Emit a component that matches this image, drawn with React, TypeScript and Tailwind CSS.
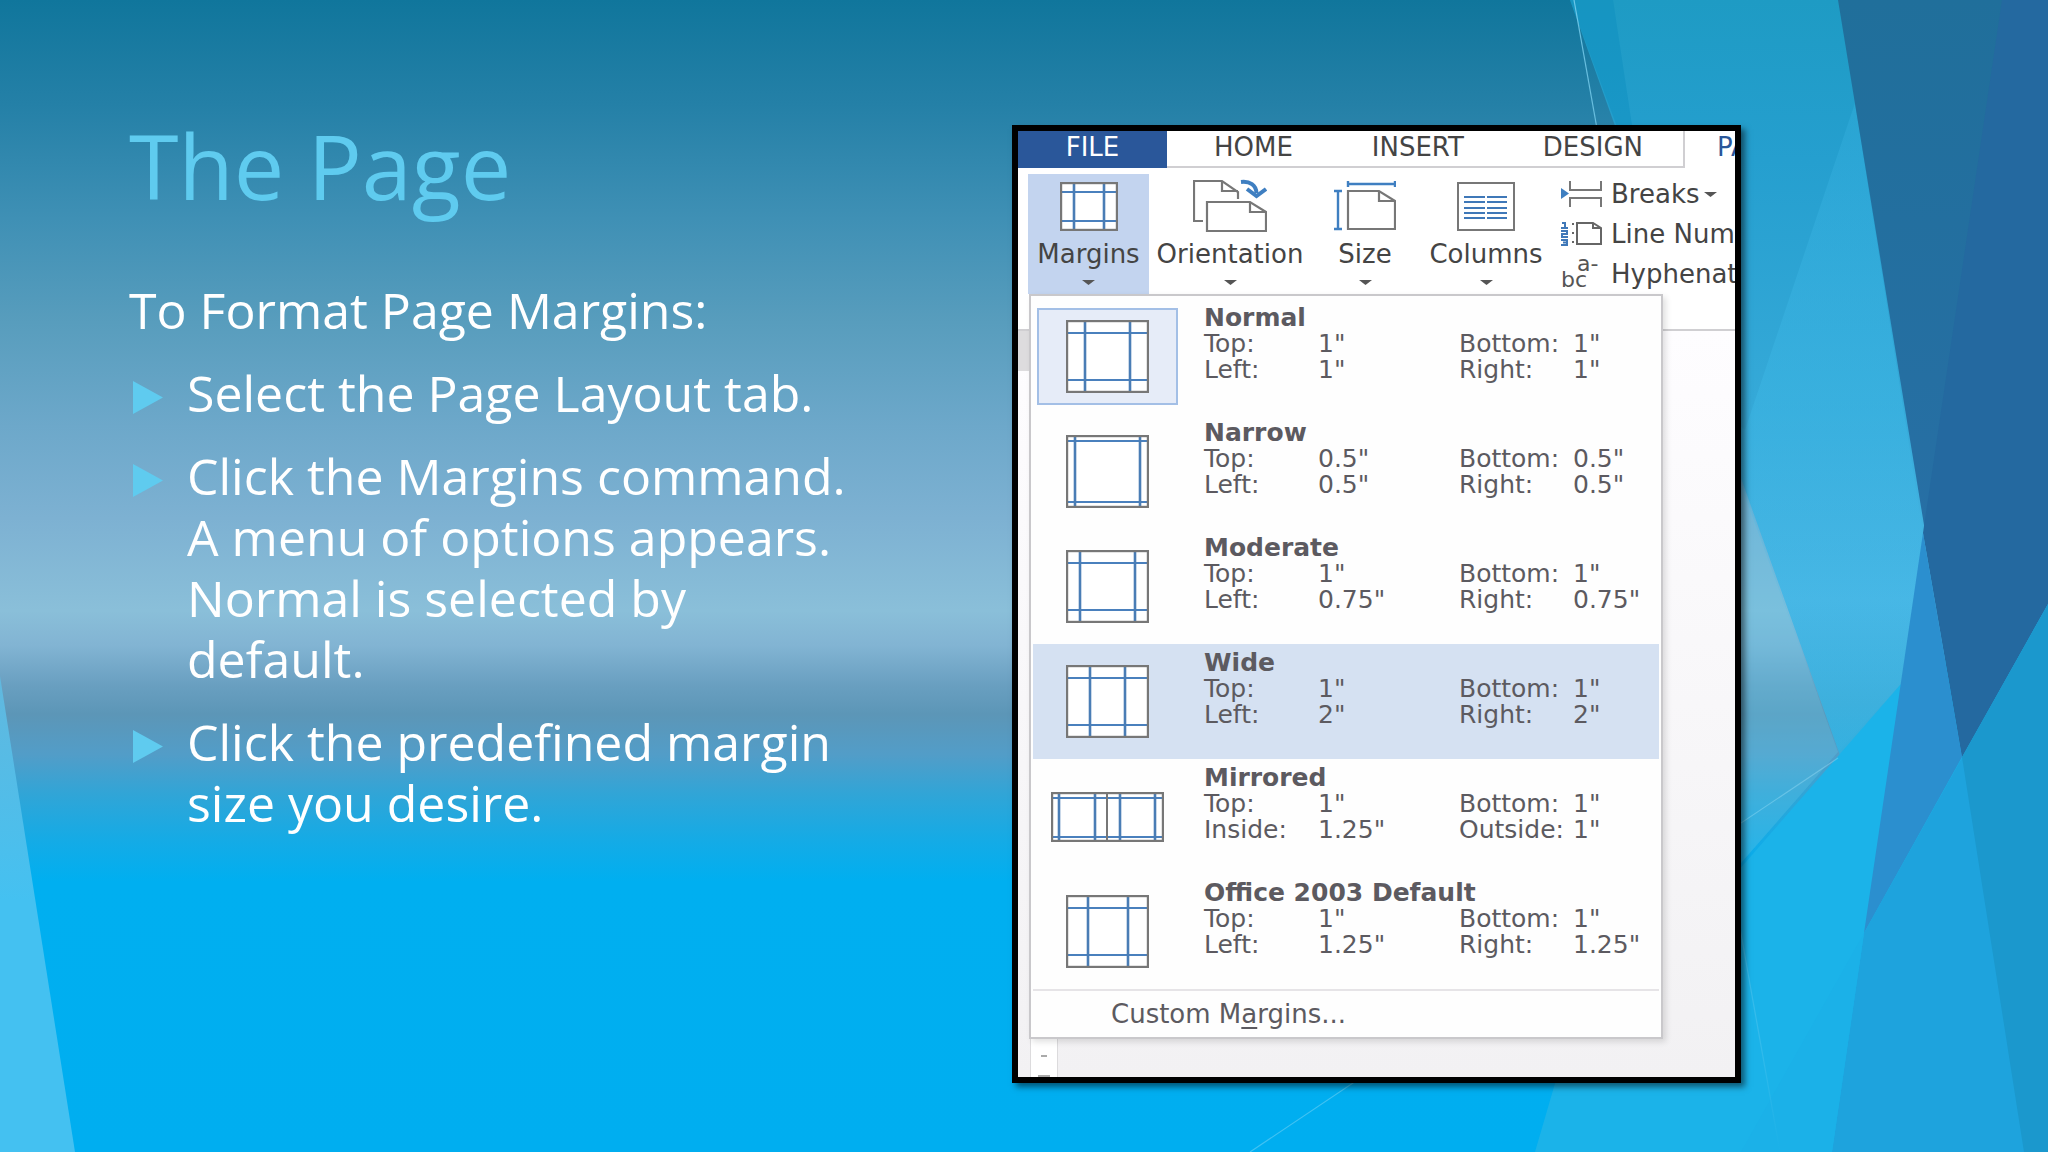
import type { ReactNode } from "react";

type PageGuidesProps = {
  width: number;
  height: number;
  columns: number[];
  rows: number[];
  spine?: number;
};

// Small page thumbnail with its margin guides
const PageGuides = ({ width, height, columns, rows, spine }: PageGuidesProps) => (
  <svg width={width} height={height} viewBox={`0 0 ${width} ${height}`} aria-hidden="true">
    <rect x="1" y="1" width={width - 2} height={height - 2} fill="#fff" />
    {rows.map((y) => (
      <path key={y} d={`M2 ${y}H${width - 2}`} stroke="#4a80bd" strokeWidth="2" />
    ))}
    {columns.map((x) => (
      <path key={x} d={`M${x} 2V${height - 2}`} stroke="#4a7db5" strokeWidth="2.6" />
    ))}
    {spine && <path d={`M${spine} 1V${height - 1}`} stroke="#777" strokeWidth="2" />}
    <rect x="1" y="1" width={width - 2} height={height - 2} fill="none" stroke="#777" strokeWidth="2.4" />
  </svg>
);

const OrientationIcon = () => (
  <svg width="74" height="54" viewBox="0 0 74 54" fill="none" stroke="#777" strokeWidth="2.2" aria-hidden="true">
    <path d="M10 42H1V2h28l16 11v7" />
    <path d="M29 2v10h16" />
    <path d="M14 23h43l16 10v19H14z" fill="#fff" />
    <path d="M57 23v10h16" />
    <path d="M48 3c9-1 15 3 15.500 11" stroke="#3f7fc1" strokeWidth="4" />
    <path d="M54 10l9.500 7 9.500-7" stroke="#3f7fc1" strokeWidth="4" />
  </svg>
);

const SizeIcon = () => (
  <svg width="62" height="50" viewBox="0 0 62 50" fill="none" strokeWidth="2.2" aria-hidden="true">
    <path d="M14 10h31l16 10v28H14z" stroke="#777" fill="#fff" />
    <path d="M45 10v10h16" stroke="#777" />
    <path d="M14 3h47M14 0v6M61 0v6M4 10v38M0 10h8M0 48h8" stroke="#3f7fc1" strokeWidth="2.400" />
  </svg>
);

const ColumnsIcon = () => (
  <svg width="58" height="49" viewBox="0 0 58 49" fill="none" strokeWidth="2" aria-hidden="true">
    <rect x="1" y="1" width="56" height="47" fill="#fff" stroke="#777" />
    <path
      d="M7 15h21M30 15h20M7 20h21M30 20h20M7 26h21M30 26h20M7 31h21M30 31h20M7 36h21M30 36h20"
      stroke="#3f78b8"
    />
  </svg>
);

const BreaksIcon = () => (
  <svg width="42" height="28" viewBox="0 0 42 28" fill="none" stroke="#777" strokeWidth="2" aria-hidden="true">
    <path d="M9 1v9h31V1M9 27v-9h31v9" />
    <path d="M0 8l8 5.500L0 19z" fill="#3f7fc1" stroke="none" />
  </svg>
);

const LineNumbersIcon = () => (
  <svg width="42" height="26" viewBox="0 0 42 26" fill="none" stroke="#666" strokeWidth="2" aria-hidden="true">
    <path d="M16 2h16l8 5v16H16z" />
    <path d="M32 2v5h8" />
    <path d="M11 3h2M11 12h2M11 21h2" />
    <path d="M1 2h3v5M0 7h7M0 10h6v3H1v3h6M0 19h6v5H0M2 21.500h4" stroke="#3f78b8" />
  </svg>
);

const HyphenationIcon = () => (
  <span className="flex w-[42px] flex-col text-left text-[22px] text-[#555]" aria-hidden="true">
    <span className="pl-4 leading-3">a-</span>
    <span className="leading-5">bc</span>
  </span>
);

const Caret = () => (
  <svg width="13" height="5" viewBox="0 0 13 5" className="shrink-0" aria-hidden="true">
    <path d="M0 0h13L6.500 5z" fill="#555" />
  </svg>
);

type RibbonButtonProps = {
  label: string;
  icon: ReactNode;
  className: string;
};

const RibbonButton = ({ label, icon, className }: RibbonButtonProps) => (
  <button type="button" className={`flex h-[120px] flex-col items-center ${className}`}>
    <span className="flex h-16 items-center">{icon}</span>
    <span className="leading-8">{label}</span>
    <span className="mt-2.5">
      <Caret />
    </span>
  </button>
);

const commands = [
  { label: "Breaks", icon: <BreaksIcon /> },
  { label: "Line Numbers", icon: <LineNumbersIcon /> },
  { label: "Hyphenation", icon: <HyphenationIcon /> },
];

const presets = [
  {
    name: "Normal",
    values: ["Top:", '1"', "Bottom:", '1"', "Left:", '1"', "Right:", '1"'],
    icon: <PageGuides width={83} height={73} columns={[19, 64]} rows={[13, 60]} />,
    state: "selected",
  },
  {
    name: "Narrow",
    values: ["Top:", '0.5"', "Bottom:", '0.5"', "Left:", '0.5"', "Right:", '0.5"'],
    icon: <PageGuides width={83} height={73} columns={[9, 74]} rows={[6, 67]} />,
  },
  {
    name: "Moderate",
    values: ["Top:", '1"', "Bottom:", '1"', "Left:", '0.75"', "Right:", '0.75"'],
    icon: <PageGuides width={83} height={73} columns={[14, 69]} rows={[13, 60]} />,
  },
  {
    name: "Wide",
    values: ["Top:", '1"', "Bottom:", '1"', "Left:", '2"', "Right:", '2"'],
    icon: <PageGuides width={83} height={73} columns={[24, 59]} rows={[13, 60]} />,
    state: "hover",
  },
  {
    name: "Mirrored",
    values: ["Top:", '1"', "Bottom:", '1"', "Inside:", '1.25"', "Outside:", '1"'],
    icon: <PageGuides width={113} height={50} columns={[8, 44, 69, 104]} rows={[6, 45]} spine={56} />,
  },
  {
    name: "Office 2003 Default",
    values: ["Top:", '1"', "Bottom:", '1"', "Left:", '1.25"', "Right:", '1.25"'],
    icon: <PageGuides width={83} height={73} columns={[22, 62]} rows={[13, 60]} />,
  },
];

const MarginsMenu = () => (
  <div className="absolute left-[11px] top-[163px] w-[634px] border-2 border-[#c9c8cb] bg-[#fefefe] px-0.5 pt-[3px] text-[25px] text-[#5c5a60] shadow-[3px_3px_6px_rgba(0,0,0,0.12)]">
    {presets.map((preset) => (
      <button
        key={preset.name}
        type="button"
        className={`flex h-[115px] w-full items-center text-left ${preset.state === "hover" ? "bg-[#d5e1f2]" : ""}`}
      >
        <span
          className={`ml-1 flex h-[97px] w-[141px] items-center justify-center ${
            preset.state === "selected" ? "border-2 border-[#a3bfe6] bg-[#e6ecf8]" : ""
          }`}
        >
          {preset.icon}
        </span>
        <span className="ml-[26px] block flex-1 self-start pt-1.5 leading-[26px]">
          <span className="block font-bold">{preset.name}</span>
          <span className="grid grid-cols-[114px_141px_114px_1fr]">
            {preset.values.map((value, i) => (
              <span key={i}>{value}</span>
            ))}
          </span>
        </span>
      </button>
    ))}
    <button
      type="button"
      className="block h-12 w-full border-t-2 border-[#e6e4e7] pl-[78px] text-left text-[26px]"
    >
      Custom M<span className="underline decoration-2 underline-offset-4">a</span>rgins...
    </button>
  </div>
);

const WordWindow = () => (
  <figure className="mt-2 w-[729px] shrink-0 border-[6px] border-black bg-white font-['DejaVu_Sans',sans-serif] text-[26px] text-[#444] shadow-[4px_4px_6px_rgba(0,0,0,0.5)]">
    <div className="relative overflow-hidden">
      <nav className="flex h-[37px] leading-[31px]">
        <button type="button" className="w-[149px] shrink-0 bg-[#2a579a] pb-1 text-white">
          FILE
        </button>
        <div className="flex w-[518px] shrink-0 justify-between border-b-2 border-r-2 border-[#d0cfd2] pl-[47px] pr-10">
          <button type="button" className="pb-0.5">HOME</button>
          <button type="button" className="pb-0.5">INSERT</button>
          <button type="button" className="pb-0.5">DESIGN</button>
        </div>
        <button type="button" className="ml-8 shrink-0 whitespace-nowrap pb-1 text-[#2a579a]">
          PAGE LAYOUT
        </button>
      </nav>

      <div className="flex h-[163px] border-b-2 border-[#d0cfd2] pl-2.5 pt-[6px]">
        <RibbonButton
          label="Margins"
          className="w-[121px] shrink-0 bg-[#c3d4ef]"
          icon={<PageGuides width={58} height={49} columns={[14, 44]} rows={[10, 39]} />}
        />
        <RibbonButton label="Orientation" className="w-[162px] shrink-0" icon={<OrientationIcon />} />
        <RibbonButton label="Size" className="w-[108px] shrink-0" icon={<SizeIcon />} />
        <RibbonButton label="Columns" className="w-[134px] shrink-0" icon={<ColumnsIcon />} />
        <div className="ml-2 shrink-0">
          {commands.map((command) => (
            <button key={command.label} type="button" className="flex h-10 items-center gap-1 whitespace-nowrap">
              <span className="mr-1">{command.icon}</span>
              {command.label}
              <Caret />
            </button>
          ))}
        </div>
      </div>

      <div className="flex h-[746px] flex-col justify-between bg-gradient-to-b from-[#fefdff] to-[#f2f1f3]">
        <div className="h-10 w-3 bg-[#dddcde]"></div>
        <div className="ml-3 flex h-10 w-7 flex-col items-center justify-between border-x border-[#dcdbdd] bg-white pt-[18px]">
          <span className="h-0.5 w-1.5 bg-[#aaa]"></span>
          <span className="h-0.5 w-3 bg-[#aaa]"></span>
        </div>
      </div>

      <MarginsMenu />
    </div>
  </figure>
);

const Backdrop = () => (
  <svg
    className="absolute inset-0 h-full w-full"
    viewBox="0 0 2048 1152"
    preserveAspectRatio="none"
    aria-hidden="true"
  >
    <defs>
      <linearGradient id="sky" gradientUnits="userSpaceOnUse" x1="0" y1="0" x2="0" y2="1152">
        <stop offset="0" stopColor="#10769c" />
        <stop offset="0.09" stopColor="#2480a7" />
        <stop offset="0.19" stopColor="#3f90b5" />
        <stop offset="0.28" stopColor="#589dbd" />
        <stop offset="0.37" stopColor="#6da8ca" />
        <stop offset="0.45" stopColor="#7db1d2" />
        <stop offset="0.53" stopColor="#8abfd9" />
        <stop offset="0.56" stopColor="#82b4d3" />
        <stop offset="0.595" stopColor="#699fc0" />
        <stop offset="0.62" stopColor="#5c96b7" />
        <stop offset="0.655" stopColor="#529dc8" />
        <stop offset="0.69" stopColor="#30a5d7" />
        <stop offset="0.73" stopColor="#14abe6" />
        <stop offset="0.765" stopColor="#00aff0" />
        <stop offset="1" stopColor="#00aef0" />
      </linearGradient>
      <linearGradient id="light" gradientUnits="userSpaceOnUse" x1="0" y1="0" x2="0" y2="800">
        <stop offset="0" stopColor="#1e9bc4" />
        <stop offset="0.2" stopColor="#259fcf" />
        <stop offset="0.5" stopColor="#35a9d8" />
        <stop offset="0.75" stopColor="#48b7e5" />
        <stop offset="0.88" stopColor="#3cafdc" />
        <stop offset="1" stopColor="#29b0e2" />
      </linearGradient>
      <linearGradient id="haze" gradientUnits="userSpaceOnUse" x1="0" y1="100" x2="0" y2="700">
        <stop offset="0" stopColor="#3db8e6" stopOpacity="0.25" />
        <stop offset="0.5" stopColor="#3db8e6" stopOpacity="0.45" />
        <stop offset="1" stopColor="#46b8e8" stopOpacity="0.1" />
      </linearGradient>
      <linearGradient id="edge" gradientUnits="userSpaceOnUse" x1="0" y1="676" x2="0" y2="900">
        <stop offset="0" stopColor="#62b8de" />
        <stop offset="1" stopColor="#44c1f1" />
      </linearGradient>
      <linearGradient id="deep" gradientUnits="userSpaceOnUse" x1="0" y1="0" x2="0" y2="600">
        <stop offset="0" stopColor="#206f9b" />
        <stop offset="1" stopColor="#286fa6" />
      </linearGradient>
      <linearGradient id="thread" gradientUnits="userSpaceOnUse" x1="0" y1="0" x2="0" y2="1152">
        <stop offset="0" stopColor="#7fd3f2" stopOpacity="0.8" />
        <stop offset="0.9" stopColor="#7fd3f2" stopOpacity="0.25" />
        <stop offset="1" stopColor="#7fd3f2" stopOpacity="0" />
      </linearGradient>
    </defs>
    <rect width="2048" height="1152" fill="url(#sky)" />
    <path d="M1570 0H2048V800H1856z" fill="url(#light)" />
    <path d="M1570 0h43l20 132h-14z" fill="#0a8cbd" fillOpacity="0.4" />
    <path d="M1855 103L1923 533 1900 685 1838 752 1710 400 1745 430z" fill="url(#haze)" />
    <path d="M1700 367L1838 752 1700 910z" fill="#5cc4e6" fillOpacity="0.35" />
    <path d="M1535 1152L1556 1080 1900 685 2048 600V1152z" fill="#1bb3e9" />
    <path d="M1838 0H2048V604L1962 757z" fill="url(#deep)" />
    <path d="M2002 0H2048V604L1962 757 1923 533z" fill="#2469a0" />
    <path d="M1923 533L1962 757 1864 933z" fill="#2b8fcf" />
    <path d="M1864 933L2048 604V1152H1832z" fill="#1ea3dd" />
    <path d="M1864 933L1832 1152H1741z" fill="#1bb1e8" />
    <path d="M1962 757L2048 604V1152H2024z" fill="#1b98cd" />
    <path d="M1574 0L1780 1152" stroke="url(#thread)" strokeWidth="1.200" />
    <path d="M1838 758L1250 1152" stroke="#9fe0f7" strokeWidth="1.200" strokeOpacity="0.4" />
    <path d="M0 676L75 1152H0z" fill="url(#edge)" />
  </svg>
);

const steps = [
  "Select the Page Layout tab.",
  "Click the Margins command. A menu of options appears. Normal is selected by default.",
  "Click the predefined margin size you desire.",
];

const App = () => {
  return (
    <main className="relative min-h-screen font-['Open_Sans',sans-serif]">
      <Backdrop />
      <div className="relative flex items-start justify-between pb-12 pl-[129px] pr-[307px] pt-[117px]">
        <section className="max-w-[730px] flex-1 text-[50px] leading-[61px] text-white">
          <h1 className="mb-[67px] text-[90px] leading-[96px] text-[#5fcbef]">The Page</h1>
          <p>To Format Page Margins:</p>
          <ul>
            {steps.map((step) => (
              <li key={step} className="mt-[22px] flex items-start">
                <svg width="30" height="33" viewBox="0 0 30 33" className="ml-1 mr-6 mt-[18px] shrink-0" aria-hidden="true">
                  <path d="M0 0L30 16.500 0 33z" fill="#5fcbef" />
                </svg>
                <span>{step}</span>
              </li>
            ))}
          </ul>
        </section>
        <WordWindow />
      </div>
    </main>
  );
};

export default App;
